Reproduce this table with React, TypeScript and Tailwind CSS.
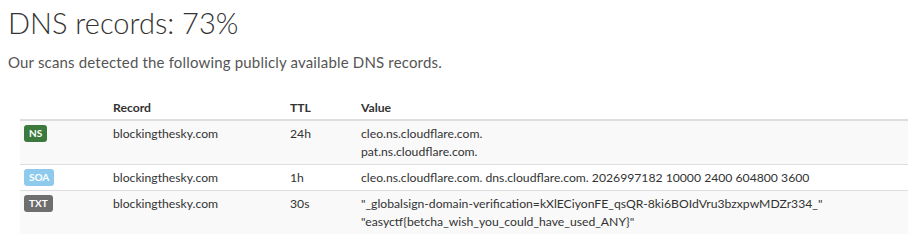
import React from "react";

const font = { fontFamily: "Lato, 'Liberation Sans', sans-serif" };

function Badge({ label, cls }: { label: string; cls: string }) {
  return (
    <span
      className={`inline-flex h-[17px] items-center justify-center rounded-[3px] px-[5px] text-[10px] font-bold leading-none text-white ${cls}`}
    >
      {label}
    </span>
  );
}

export default function App() {
  const rows = [
    {
      badge: <Badge label="NS" cls="bg-[#3b7a3c]" />,
      record: "blockingthesky.com",
      ttl: "24h",
      value: ["cleo.ns.cloudflare.com.", "pat.ns.cloudflare.com."],
      bg: "bg-[#f9f9f9]",
    },
    {
      badge: <Badge label="SOA" cls="bg-[#8ecaee]" />,
      record: "blockingthesky.com",
      ttl: "1h",
      value: ["cleo.ns.cloudflare.com. dns.cloudflare.com. 2026997182 10000 2400 604800 3600"],
      bg: "bg-white",
    },
    {
      badge: <Badge label="TXT" cls="bg-[#6e6e6e]" />,
      record: "blockingthesky.com",
      ttl: "30s",
      value: [
        '"_globalsign-domain-verification=kXlECiyonFE_qsQR-8ki6BOIdVru3bzxpwMDZr334_"',
        '"easyctf{betcha_wish_you_could_have_used_ANY}"',
      ],
      bg: "bg-[#f9f9f9]",
    },
  ];
  return (
    <div className="h-[248px] w-[914px] bg-white text-[#333]" style={font}>
      <h1 className="pl-2 pt-[5px] text-[29px] font-light leading-[36px] text-[#333]">DNS records: 73%</h1>
      <p className="mt-[11px] pl-2 text-[15px] leading-[20px] tracking-[0.17px] text-[#555]">
        Our scans detected the following publicly available DNS records.
      </p>
      <div className="ml-5 mr-[6px] mt-[27px] text-[12.2px]">
        <div className="grid grid-cols-[93px_177px_71px_1fr] border-b-2 border-[#ddd] pb-[2px] font-bold leading-[18px]">
          <div />
          <div>Record</div>
          <div>TTL</div>
          <div>Value</div>
        </div>
        {rows.map((r, i) => (
          <div
            key={i}
            className={`grid grid-cols-[93px_177px_71px_1fr] border-b border-[#ddd] pb-[3px] pt-[4px] leading-[18px] last:border-b-0 ${r.bg}`}
          >
            <div className="-mt-[1px] pl-1">{r.badge}</div>
            <div>{r.record}</div>
            <div>{r.ttl}</div>
            <div>
              {r.value.map((v, j) => (
                <div key={j}>{v}</div>
              ))}
            </div>
          </div>
        ))}
      </div>
    </div>
  );
}
